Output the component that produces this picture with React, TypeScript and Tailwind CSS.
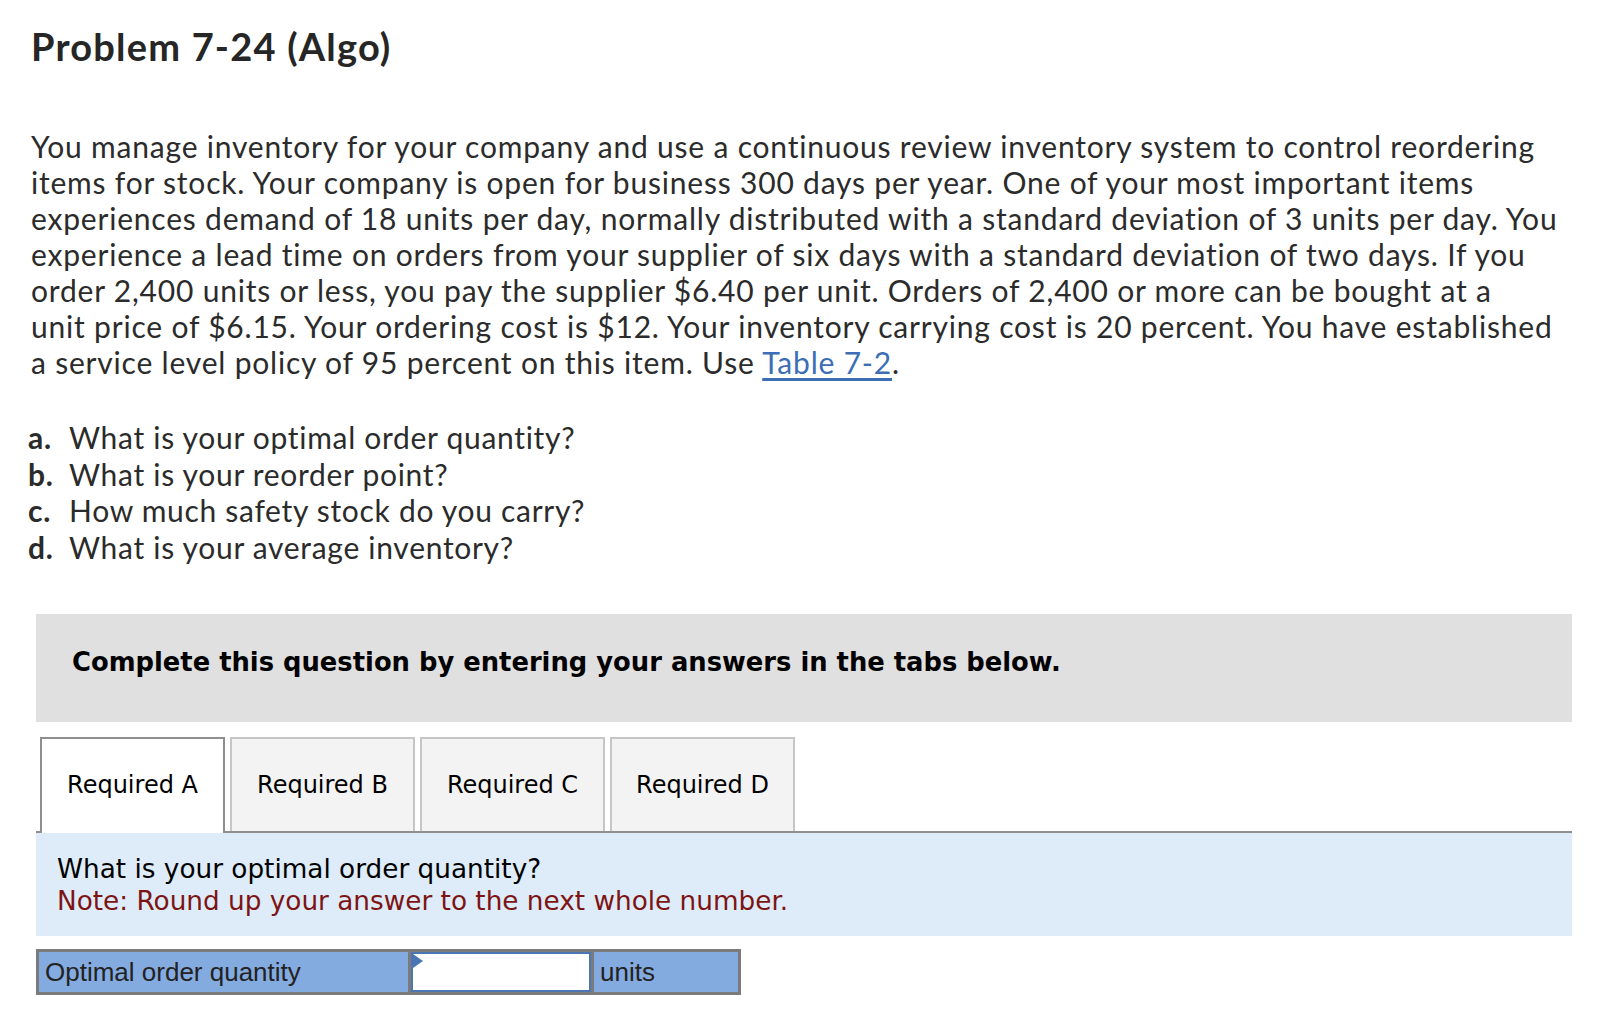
import React from "react";

const bodyLines: React.ReactNode[] = [
  "You manage inventory for your company and use a continuous review inventory system to control reordering",
  "items for stock. Your company is open for business 300 days per year. One of your most important items",
  "experiences demand of 18 units per day, normally distributed with a standard deviation of 3 units per day. You",
  "experience a lead time on orders from your supplier of six days with a standard deviation of two days. If you",
  "order 2,400 units or less, you pay the supplier $6.40 per unit. Orders of 2,400 or more can be bought at a",
  "unit price of $6.15. Your ordering cost is $12. Your inventory carrying cost is 20 percent. You have established",
];

const questions = [
  ["a.", "What is your optimal order quantity?"],
  ["b.", "What is your reorder point?"],
  ["c.", "How much safety stock do you carry?"],
  ["d.", "What is your average inventory?"],
];

export default function App() {
  return (
    <div className="min-h-screen bg-white">
      <div
        className="pl-[31px] pt-[24px] text-[#2b2b2b]"
        style={{ fontFamily: "Lato, 'Open Sans', sans-serif" }}
      >
        <h1 className="text-[38px] font-bold leading-[44px] tracking-[1.2px] text-[#262626]">
          Problem 7-24 (Algo)
        </h1>
        <div className="mt-[60px] text-[30px] leading-[36px] tracking-[0.8px]">
          {bodyLines.map((l, i) => (
            <div key={i} className="whitespace-nowrap">
              {l}
            </div>
          ))}
          <div className="whitespace-nowrap">
            a service level policy of 95 percent on this item. Use{" "}
            <a className="text-[#3d6db5] underline underline-offset-[4px]" href="#">
              Table 7-2
            </a>
            .
          </div>
        </div>
        <div className="mt-[39px] text-[30px] leading-[36.5px] tracking-[0.7px]">
          {questions.map(([k, q]) => (
            <div key={k} className="flex whitespace-nowrap">
              <span className="w-[22px] -ml-[3px] text-right font-bold">{k}</span>
              <span className="ml-[19px]">{q}</span>
            </div>
          ))}
        </div>
      </div>

      <div className="ml-[36px] mr-[52px] mt-[49px]">
        <div
          className="h-[108px] bg-[#e0e0e0] pl-[36px] pt-[29px] text-[25.8px] font-bold text-black"
          style={{ fontFamily: "'DejaVu Sans', Verdana, sans-serif" }}
        >
          Complete this question by entering your answers in the tabs below.
        </div>

        <div
          className="mt-[15px] flex gap-[5px] border-b-2 border-[#8f8f8f] pl-[4px]"
          style={{ fontFamily: "'DejaVu Sans', Verdana, sans-serif" }}
        >
          <div className="relative z-10 -mb-[2px] flex h-[96px] w-[185px] items-center justify-center border-2 border-b-0 border-[#8f8f8f] bg-white pb-[2px] text-[24px] text-black">
            Required A
          </div>
          {["Required B", "Required C", "Required D"].map((t) => (
            <div
              key={t}
              className="flex h-[94px] w-[185px] items-center justify-center border-2 border-b-0 border-[#c6c6c6] bg-[#f3f3f3] text-[24px] text-black"
            >
              {t}
            </div>
          ))}
        </div>

        <div
          className="bg-[#ddecf8] pl-[21px] pt-[20px] pb-[19px] text-[26.3px] leading-[32px]"
          style={{ fontFamily: "'DejaVu Sans', Verdana, sans-serif" }}
        >
          <div className="text-black">What is your optimal order quantity?</div>
          <div className="text-[#7d1414]">Note: Round up your answer to the next whole number.</div>
        </div>

        <div
          className="mt-[13px] flex h-[46px] w-[705px] border-[3px] border-[#7b7b7b] bg-[#84abdf] text-[26px] text-[#222]"
          style={{ fontFamily: "'Liberation Sans', Arial, sans-serif" }}
        >
          <div className="flex w-[372px] items-center border-r-[3px] border-[#7b7b7b] pl-[6px]">
            Optimal order quantity
          </div>
          <div className="relative w-[183px] border-r-[3px] border-[#7b7b7b] bg-white shadow-[inset_0_0_0_2px_#4a77b4]">
            <svg className="absolute left-[2px] top-[2px]" width="10" height="14" viewBox="0 0 10 14">
              <polygon points="0,0 10,7 0,14" fill="#4a77b4" />
            </svg>
          </div>
          <div className="flex flex-1 items-center pl-[6px]">units</div>
        </div>
      </div>
    </div>
  );
}
